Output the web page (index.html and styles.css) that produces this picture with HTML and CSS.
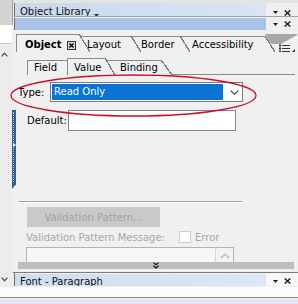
FILE: index.html
```html
<!DOCTYPE html>
<html>
<head>
<meta charset="utf-8">
<link rel="stylesheet" href="styles.css">
</head>
<body>
<div class="app">
  <div class="main">
    <div class="strip">
      <div class="strip-top"></div>
      <div class="strip-white"></div>
      <div class="strip-up"><svg width="7" height="5" viewBox="0 0 7 5"><path d="M0.6 4.4L3.5 1.3L6.4 4.4" fill="none" stroke="#555" stroke-width="1.3"/></svg></div>
      <div class="strip-fill"></div>
      <div class="strip-down"><svg width="7" height="5" viewBox="0 0 7 5"><path d="M0.6 0.6L3.5 3.7L6.4 0.6" fill="none" stroke="#555" stroke-width="1.3"/></svg></div>
      <div class="dock"><span class="dock-dots"></span><span class="dock-arrow"></span></div>
    </div>
    <div class="panel">
      <div class="panel-top"></div>
      <div class="hdr hdr-lib">
        <div class="hdr-main"><span class="hdr-title">Object Library</span><svg class="hdr-tri" width="5" height="3" viewBox="0 0 5 3"><path d="M0 0H5L2.5 3Z" fill="#333"/></svg></div>
        <div class="hdr-icons">
          <svg width="5" height="3" viewBox="0 0 5 3"><path d="M0 0H5L2.5 3Z" fill="#222"/></svg>
          <svg width="7" height="6" viewBox="0 0 7 6"><path d="M0.7 0.5L6.3 5.5M6.3 0.5L0.7 5.5" stroke="#222" stroke-width="1.5"/></svg>
        </div>
      </div>
      <div class="hdr hdr-blue">
        <div class="hdr-main"></div>
        <div class="hdr-icons">
          <svg width="5" height="3" viewBox="0 0 5 3"><path d="M0 0H5L2.5 3Z" fill="#222"/></svg>
          <svg width="7" height="6" viewBox="0 0 7 6"><path d="M0.7 0.5L6.3 5.5M6.3 0.5L0.7 5.5" stroke="#222" stroke-width="1.5"/></svg>
        </div>
      </div>
      <div class="tabs">
        <div class="tab sel tab-object"><b>Object</b><svg class="tab-close" width="9" height="9" viewBox="0 0 9 9"><rect x="0.5" y="0.5" width="8" height="8" fill="#d9d9d9" stroke="#333"/><path d="M2.4 2.4L6.6 6.6M6.6 2.4L2.4 6.6" stroke="#000" stroke-width="1.4"/></svg></div>
        <div class="tab tab-layout">Layout</div>
        <div class="tab tab-border">Border</div>
        <div class="tab tab-access">Accessibility</div>
        <div class="tab-fold">
          <svg width="32" height="18" viewBox="0 0 32 18">
            <polygon points="0,0 32,0 32,1 16,10 6,10" fill="#a7a7a7"/>
            <rect x="14" y="10.5" width="2" height="2" fill="#333"/>
            <rect x="17" y="11" width="8" height="1" fill="#333"/>
            <rect x="14" y="13.5" width="2" height="2" fill="#333"/>
            <rect x="17" y="14" width="8" height="1" fill="#333"/>
            <rect x="14" y="16.5" width="2" height="1.5" fill="#333"/>
            <rect x="17" y="17" width="8" height="1" fill="#333"/>
            <path d="M30 15V18H27Z" fill="#333"/>
          </svg>
        </div>
      </div>
      <div class="content">
        <div class="subtabs">
          <div class="stab stab-field">Field</div>
          <div class="stab sel stab-value">Value</div>
          <div class="stab stab-binding">Binding</div>
          <div class="stab-rest"></div>
        </div>
        <div class="row row-type">
          <span class="lbl lbl-type">Type:</span>
          <div class="select">
            <span class="sel-text">Read Only</span>
            <svg class="sel-chev" width="9" height="5" viewBox="0 0 9 5"><path d="M0.6 0.6L4.5 4.2L8.4 0.6" fill="none" stroke="#444" stroke-width="1.2"/></svg>
          </div>
        </div>
        <div class="row row-default">
          <span class="lbl lbl-default">Default:</span>
          <div class="input"></div>
        </div>
        <div class="sep"></div>
        <div class="btn">Validation Pattern...</div>
        <div class="msg-row">
          <span class="msg-lbl">Validation Pattern Message:</span>
          <span class="check"></span>
          <span class="err">Error</span>
        </div>
        <div class="textarea">
          <div class="ta-scroll"><svg width="10" height="6" viewBox="0 0 10 6"><path d="M0.8 5.2L5 1.2L9.2 5.2" fill="none" stroke="#c4c4c4" stroke-width="1.6"/></svg></div>
        </div>
      </div>
      <div class="graybar"><svg width="6" height="7" viewBox="0 0 6 7"><path d="M0.5 0.6L3 2.8L5.5 0.6M0.5 3.8L3 6L5.5 3.8" fill="none" stroke="#111" stroke-width="1.2"/></svg></div>
      <div class="hline"></div>
      <div class="hdr hdr-font">
        <div class="hdr-main"><span class="hdr-title">Font - Paragraph</span></div>
        <div class="hdr-icons">
          <svg width="5" height="3" viewBox="0 0 5 3"><path d="M0 0H5L2.5 3Z" fill="#222"/></svg>
          <svg width="7" height="6" viewBox="0 0 7 6"><path d="M0.7 0.5L6.3 5.5M6.3 0.5L0.7 5.5" stroke="#222" stroke-width="1.5"/></svg>
        </div>
      </div>
    </div>
  </div>
  <div class="bottom-white"></div>
  <div class="bottom-line"></div>
  <div class="bottom-gap"></div>
  <div class="lavender"></div>
  <svg class="annot" width="298" height="304" viewBox="0 0 298 304"><ellipse cx="133.5" cy="95.5" rx="122.5" ry="20.5" fill="none" stroke="#c8102e" stroke-width="1.3"/></svg>
</div>
</body>
</html>
```

FILE: styles.css
```css
* { box-sizing: border-box; margin: 0; padding: 0; }
html, body { width: 298px; height: 304px; overflow: hidden; }
body {
  background: #f0f0f0;
  font-family: "DejaVu Sans", Tahoma, sans-serif;
  font-size: 10px;
  color: #000;
}
svg { display: block; }

.app { position: relative; display: flex; flex-direction: column; width: 298px; height: 304px; }
.main { display: flex; height: 287px; }

/* left strip */
.strip { position: relative; width: 13px; flex: none; display: flex; flex-direction: column; background: #ececec; z-index: 2; }
.strip-top { height: 25px; width: 13px; background: #d4d4d4; border-right: 1px solid #a2a2a2; }
.strip-white { height: 19px; width: 12px; background: #fff; border-bottom: 1px solid #c9c9c9; }
.strip-up { height: 16px; padding: 8px 0 0 1px; }
.strip-fill { flex: 1; }
.strip-down { height: 14px; padding: 4px 0 0 1px; }
.dock {
  position: absolute; left: 12px; top: 110px; width: 4px; height: 79px;
  background: #34608f;
  clip-path: polygon(0 0, 100% 0, 100% 94%, 0 100%);
}
.dock-dots { position: absolute; left: 1px; top: 2px; height: 70px; border-left: 1px dotted #b9d0ea; }
.dock-arrow {
  position: absolute; left: 1px; top: 33px; width: 0; height: 0;
  border-top: 2px solid transparent; border-bottom: 2px solid transparent; border-left: 3px solid #fff;
}

/* panel */
.panel { flex: 1; min-width: 0; display: flex; flex-direction: column; }
.panel-top { height: 3px; background: #e4e4e4; }

.hdr { display: flex; margin-left: 1px; border-left: 1px solid #6f6f6f; flex: none; }
.hdr-main { flex: 1; overflow: hidden; display: flex; align-items: flex-start; }
.hdr-icons { width: 32px; flex: none; display: flex; align-items: center; padding-left: 7px; gap: 6px; }
.hdr-title { display: block; padding-left: 5px; line-height: 13px; color: #111; white-space: nowrap; }

.hdr-lib { height: 14px; border-bottom: 1px solid #a3a3a3; }
.hdr-lib .hdr-main { background: linear-gradient(90deg, #c9d8ec, #d9e5f4); padding-top: 2px; }
.hdr-lib .hdr-tri { margin: 9px 0 0 3px; }
.hdr-lib .hdr-icons { align-items: flex-start; padding-top: 7px; }
.hdr-lib .hdr-icons svg:first-child { margin-top: 1px; }

.hdr-blue { height: 12px; margin-top: 1px; }
.hdr-blue .hdr-main { background: #a8c3e6; }

/* main tabs */
.tabs { display: flex; align-items: flex-end; height: 18px; margin-top: 4px; padding-left: 3px; }
.tab {
  position: relative; flex: none; height: 16px;
  border-top: 1px solid #8a8a8a; background: #f0f0f0;
  line-height: 15px; white-space: nowrap;
}
.tab::after {
  content: ""; position: absolute; left: 100%; top: -1px; width: 10px; height: 16px;
  background: linear-gradient(to top right, #f0f0f0 calc(50% - 0.6px), #7a7a7a calc(50% - 0.6px), #7a7a7a calc(50% + 0.6px), transparent calc(50% + 0.6px));
}
.tab.sel { height: 18px; border-left: 1px solid #8a8a8a; padding-top: 2px; }
.tab.sel::after { height: 18px; width: 11px; }
.tab-object { width: 63px; padding-left: 8px; display: flex; align-items: flex-start; z-index: 6; }
.tab-object b { line-height: 15px; }
.tab-close { margin: 4px 0 0 5px; }
.tab-layout { width: 52px; padding-left: 8px; z-index: 5; }
.tab-border { width: 49px; padding-left: 10px; z-index: 4; }
.tab-access { width: 85px; padding-left: 12px; z-index: 3; }
.tab-fold { width: 32px; height: 18px; flex: none; }

/* content */
.content { display: flex; flex-direction: column; padding-left: 5px; padding-right: 3px; }

.subtabs { display: flex; align-items: flex-end; height: 17px; margin-top: 6px; padding-left: 9px; }
.stab {
  position: relative; flex: none; height: 15px;
  border-top: 1px solid #8a8a8a; background: #f0f0f0;
  line-height: 14px; white-space: nowrap;
}
.stab::after {
  content: ""; position: absolute; left: 100%; top: -1px; width: 11px; height: 15px;
  background: linear-gradient(to top right, #f0f0f0 calc(50% - 0.6px), #7a7a7a calc(50% - 0.6px), #7a7a7a calc(50% + 0.6px), transparent calc(50% + 0.6px));
}
.stab.sel { height: 17px; padding-top: 2px; }
.stab.sel::after { height: 17px; width: 10px; }
.stab-field { width: 40px; padding-left: 6px; border-left: 1px solid #8a8a8a; z-index: 4; }
.stab-value { width: 38px; padding-left: 6px; border-left: 1px solid #8a8a8a; z-index: 5; }
.stab-binding { width: 56px; padding-left: 15px; z-index: 3; }
.stab-rest { flex: 1; height: 17px; border-bottom: 1px solid #8a8a8a; }

.row { display: flex; align-items: center; }
.lbl { flex: none; white-space: nowrap; }
.row-type { margin-top: 7px; height: 20px; }
.lbl-type { width: 32px; }
.select {
  width: 193px; height: 20px; border: 1px solid #7a7a7a; background: #fff;
  display: flex; align-items: center; padding: 0 1px;
}
.sel-text {
  width: 171px; height: 16px; background: #0a74d6; color: #fff;
  line-height: 16px; padding-left: 2px; white-space: nowrap;
}
.sel-chev { margin-left: 7px; }

.row-default { margin-top: 8px; height: 21px; }
.lbl-default { width: 50px; padding-left: 9px; }
.input { width: 168px; height: 21px; border: 1px solid #858585; background: #fff; }

.sep { margin-top: 70px; width: 224px; height: 2px; border-top: 1px solid #a3a3a3; border-bottom: 1px solid #fff; }

.btn {
  margin: 4px 0 0 9px; width: 133px; height: 20px;
  background: #c9c9c9; color: #a1a1a1;
  display: flex; align-items: center; justify-content: center;
  white-space: nowrap;
}

.msg-row { display: flex; align-items: center; height: 12px; margin-top: 4px; padding-left: 8px; color: #a6a6a6; }
.msg-lbl { width: 153px; flex: none; white-space: nowrap; }
.check { width: 12px; height: 12px; background: #fff; border: 1px solid #cdcdcd; flex: none; }
.err { margin-left: 4px; }

.textarea {
  margin: 4px 0 0 8px; width: 208px; height: 15px;
  border: 1px solid #b3b3b3; border-bottom: none; background: #f6f6f6;
  display: flex; justify-content: flex-end;
}
.ta-scroll { width: 18px; height: 14px; border-left: 1px solid #d6d6d6; background: #f3f3f3; display: flex; justify-content: center; padding-top: 5px; }

.graybar {
  height: 7px; margin: 0 4px 0 5px; background: #bdbdbd;
  display: flex; justify-content: center; align-items: center;
}
.hline { height: 1px; margin-top: 3px; margin-left: -1px; background: #7c7c7c; }

.hdr-font { height: 13px; }
.hdr-font .hdr-main { background: linear-gradient(90deg, #d0ddef, #dde7f5); margin-top: 1px; padding-top: 1px; }
.hdr-font .hdr-title { line-height: 13px; }
.hdr-font .hdr-icons { background: #f7f7f7; padding-top: 3px; }

.bottom-white { height: 10px; background: #fbfbfb; }
.bottom-line { height: 1px; background: #8c8c8c; }
.bottom-gap { height: 2px; background: #efefef; }
.lavender { flex: 1; background: #e6e4f4; }

.annot { position: absolute; left: 0; top: 0; pointer-events: none; z-index: 10; }
```
